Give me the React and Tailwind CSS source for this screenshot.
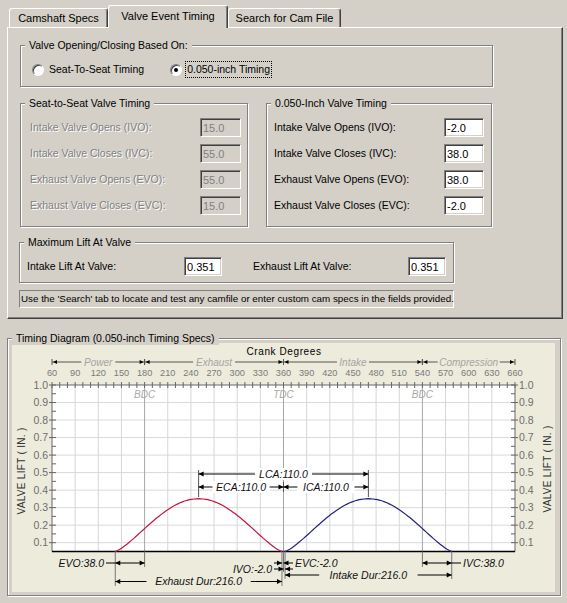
import React from 'react'

const FONT = "'Liberation Sans', Arial, sans-serif"
const CREAM = '#ecebdc'

// chart scale: degrees 60..660 across x 52..515, lift 1.0 at y 385
const X = (d) => 52 + ((d - 60) * 463) / 600
const Y = (l) => 385 + (1 - l) * 175.2

const sunken =
  'border border-t-[#808080] border-l-[#808080] border-b-white border-r-white shadow-[inset_1px_1px_0_#404040,inset_-1px_-1px_0_#d4d0c8]'
const disabledText = 'text-[#808080] [text-shadow:1px_1px_0_#fff]'

function Group({ title, className = '', children }) {
  return (
    <div className={`relative border border-[#808080] shadow-[inset_1px_1px_0_#fff,1px_1px_0_#fff] ${className}`}>
      <span className="absolute -top-[8px] left-[4px] bg-[#d4d0c8] px-[4px] leading-[14px] whitespace-nowrap">
        {title}
      </span>
      {children}
    </div>
  )
}

function Field({ value, disabled, width = 'w-[41px]' }) {
  return (
    <input
      readOnly
      value={value}
      className={`h-[19px] ${width} ${sunken} px-[2px] text-[11px] outline-none ${
        disabled ? 'bg-[#d4d0c8] text-[#808080]' : 'bg-white text-black'
      }`}
    />
  )
}

function Radio({ checked, className = '' }) {
  return (
    <span
      className={`flex h-[12px] w-[12px] shrink-0 items-center justify-center rounded-full border border-t-[#808080] border-l-[#808080] border-r-white border-b-white bg-white shadow-[inset_1px_1px_0_#404040] ${className}`}
    >
      {checked && <span className="h-[4px] w-[4px] rounded-full bg-black" />}
    </span>
  )
}

function Row({ label, value, disabled }) {
  return (
    <div className="flex h-[19px] items-center justify-between">
      <span className={disabled ? disabledText : ''}>{label}</span>
      <Field value={value} disabled={disabled} width={disabled ? 'w-[41px]' : 'w-[40px]'} />
    </div>
  )
}

const seatRows = [
  ['Intake Valve Opens (IVO):', '15.0'],
  ['Intake Valve Closes (IVC):', '55.0'],
  ['Exhaust Valve Opens (EVO):', '55.0'],
  ['Exhaust Valve Closes (EVC):', '15.0'],
]

const fiftyRows = [
  ['Intake Valve Opens (IVO):', '-2.0'],
  ['Intake Valve Closes (IVC):', '38.0'],
  ['Exhaust Valve Opens (EVO):', '38.0'],
  ['Exhaust Valve Closes (EVC):', '-2.0'],
]

const tabBase =
  'flex items-center justify-center rounded-t-[3px] border-l border-t border-white border-r border-r-[#404040] shadow-[inset_-1px_0_0_#808080] whitespace-nowrap'

function Head({ x, y, dir, size = 5 }) {
  return (
    <polygon
      points={`${x},${y} ${x - dir * size},${y - size / 2} ${x - dir * size},${y + size / 2}`}
      fill="#000"
    />
  )
}

function Label({ x, y, children, anchor = 'middle', bg = CREAM }) {
  const w = String(children).length * 5.9
  const left = anchor === 'middle' ? x - w / 2 : anchor === 'end' ? x - w : x
  return (
    <g>
      <rect x={left - 2} y={y - 6} width={w + 4} height={12} fill={bg} />
      <text x={x} y={y + 3.8} textAnchor={anchor} fontSize="10.5" fontStyle="italic" fill="#111">
        {children}
      </text>
    </g>
  )
}

function Dim({ x1, x2, y, label, bg }) {
  return (
    <g>
      <line x1={x1} y1={y} x2={x2} y2={y} stroke="#000" />
      <Head x={x1} y={y} dir={-1} />
      <Head x={x2} y={y} dir={1} />
      {label && <Label x={(x1 + x2) / 2} y={y} bg={bg}>{label}</Label>}
    </g>
  )
}

function lobe(open, close, color) {
  const pts = []
  for (let i = 0; i <= 72; i++) {
    const t = i / 72
    const lift = 0.05 + 0.301 * Math.pow(Math.sin(Math.PI * t), 1.3)
    pts.push(`${X(open + (close - open) * t).toFixed(1)},${Y(lift).toFixed(1)}`)
  }
  return <polyline points={pts.join(' ')} fill="none" stroke={color} strokeWidth="1.2" />
}

const phases = [
  [60, 180, 'Power', 30],
  [180, 360, 'Exhaust', 38],
  [360, 540, 'Intake', 28],
  [540, 660, 'Compression', 58],
]

function TimingChart() {
  const degrees = []
  for (let d = 60; d <= 660; d += 30) degrees.push(d)
  const tenths = [0.1, 0.2, 0.3, 0.4, 0.5, 0.6, 0.7, 0.8, 0.9, 1.0]
  const ticks = []
  for (let d = 60; d <= 660; d += 10) ticks.push(d)
  const halfTicks = []
  for (let l = 0.1; l <= 1.001; l += 0.05) halfTicks.push(Number(l.toFixed(2)))

  return (
    <svg width="543" height="249" viewBox="12 343 543 249" fontFamily={FONT} className="block">
      <rect x="12" y="343" width="543" height="249" fill={CREAM} />
      <rect x={X(60)} y={Y(1)} width={X(660) - X(60)} height={Y(0.05) - Y(1)} fill="#fff" />

      {/* grid */}
      {tenths.slice(0, 9).map((l) => (
        <line key={l} x1={X(60)} x2={X(660)} y1={Y(l)} y2={Y(l)} stroke="#dadada" />
      ))}
      {degrees.slice(1, -1).map((d) => (
        <line
          key={d}
          x1={X(d)}
          x2={X(d)}
          y1={Y(1)}
          y2={Y(0.05)}
          stroke={d % 180 === 0 ? '#a6a6a6' : '#d6d6d6'}
        />
      ))}

      <text x="284" y="355" textAnchor="middle" fontSize="10" letterSpacing="0.6" fill="#000">
        Crank Degrees
      </text>

      {/* phase strip */}
      {phases.map(([a, b, name, w]) => {
        const mid = (X(a) + X(b)) / 2
        return (
          <g key={name}>
            <line x1={X(a)} x2={X(b)} y1="362" y2="362" stroke="#555" />
            <line x1={X(a)} x2={X(a)} y1="359" y2="365" stroke="#555" />
            <line x1={X(b)} x2={X(b)} y1="359" y2="365" stroke="#555" />
            <Head x={X(a) + 1} y={362} dir={-1} size={4} />
            <Head x={X(b) - 1} y={362} dir={1} size={4} />
            <rect x={mid - w / 2 - 2} y="356" width={w + 4} height="12" fill={CREAM} />
            <text x={mid} y="365.5" textAnchor="middle" fontSize="10" fontStyle="italic" fill="#a4a4a4">
              {name}
            </text>
          </g>
        )
      })}

      {degrees.map((d) => (
        <text key={d} x={X(d)} y="375.5" textAnchor="middle" fontSize="9.2" fill="#7a7a7a">
          {d}
        </text>
      ))}

      {/* axes */}
      <line x1={X(60)} x2={X(660)} y1={Y(1)} y2={Y(1)} stroke="#666" />
      {ticks.map((d) => (
        <line key={d} x1={X(d)} x2={X(d)} y1={Y(1) - 3} y2={Y(1) + 3} stroke="#666" />
      ))}
      <line x1={X(60)} x2={X(60)} y1={Y(1)} y2={Y(0.05)} stroke="#666" />
      <line x1={X(660)} x2={X(660)} y1={Y(1)} y2={Y(0.05)} stroke="#666" />
      {halfTicks.map((l) => {
        const major = Math.round(l * 100) % 10 === 0
        return (
          <g key={l}>
            <line x1={X(60) - (major ? 3 : 0)} x2={X(60) + 4} y1={Y(l)} y2={Y(l)} stroke="#666" />
            <line x1={X(660) - 4} x2={X(660) + (major ? 3 : 0)} y1={Y(l)} y2={Y(l)} stroke="#666" />
          </g>
        )
      })}
      {tenths.map((l) => (
        <g key={l}>
          <text x="48" y={Y(l) + 3.6} textAnchor="end" fontSize="10.5" fill="#6e6e6e">
            {l.toFixed(1)}
          </text>
          <text x="519" y={Y(l) + 3.6} fontSize="10.5" fill="#6e6e6e">
            {l.toFixed(1)}
          </text>
        </g>
      ))}
      <line x1={X(60)} x2={X(660)} y1={Y(0.05)} y2={Y(0.05)} stroke="#000" strokeWidth="1.6" />

      <text transform="translate(25 471) rotate(-90)" textAnchor="middle" fontSize="10" letterSpacing="0.3" fill="#333">
        VALVE LIFT ( IN. )
      </text>
      <text transform="translate(551 469) rotate(-90)" textAnchor="middle" fontSize="10" letterSpacing="0.3" fill="#333">
        VALVE LIFT ( IN. )
      </text>

      {[
        [180, 'BDC'],
        [360, 'TDC'],
        [540, 'BDC'],
      ].map(([d, t]) => (
        <text key={d} x={X(d)} y="398" textAnchor="middle" fontSize="10" fontStyle="italic" fill="#a8a8a8">
          {t}
        </text>
      ))}

      {/* lobes */}
      {lobe(142, 358, '#c3173f')}
      {lobe(362, 578, '#23237e')}

      {/* centerline dimensions */}
      <line x1={X(250)} x2={X(250)} y1="470" y2="497" stroke="#555" />
      <line x1={X(470)} x2={X(470)} y1="470" y2="497" stroke="#555" />
      <line x1={X(360)} x2={X(360)} y1="482" y2="492" stroke="#555" />
      <Dim x1={X(250)} x2={X(470)} y={474} label="LCA:110.0" bg="#fff" />
      <Dim x1={X(250)} x2={X(360)} y={487} label="ECA:110.0" bg="#fff" />
      <Dim x1={X(360)} x2={X(470)} y={487} label="ICA:110.0" bg="#fff" />

      {/* extension lines below the axis */}
      {[
        [142, 586],
        [180, 567],
        [358, 586],
        [360, 572],
        [362, 579],
        [540, 567],
        [578, 579],
      ].map(([d, y2]) => (
        <line key={d} x1={X(d)} x2={X(d)} y1={Y(0.05)} y2={y2} stroke="#777" />
      ))}

      {/* EVO */}
      <line x1="106" x2={X(142)} y1="563" y2="563" stroke="#000" />
      <Dim x1={X(142)} x2={X(180)} y={563} />
      <Label x={104} y={563} anchor="end">EVO:38.0</Label>

      <Dim x1={X(142)} x2={X(358)} y={581.5} label="Exhaust Dur:216.0" />

      {/* EVC */}
      <line x1="274" x2={X(358)} y1="563" y2="563" stroke="#000" />
      <Head x={X(358)} y={563} dir={1} />
      <line x1={X(360)} x2="293" y1="563" y2="563" stroke="#000" />
      <Head x={X(360)} y={563} dir={-1} />
      <Label x={295} y={563} anchor="start">EVC:-2.0</Label>

      {/* IVO */}
      <line x1="274" x2={X(360)} y1="569" y2="569" stroke="#000" />
      <Head x={X(360)} y={569} dir={1} />
      <line x1={X(362)} x2="293" y1="569" y2="569" stroke="#000" />
      <Head x={X(362)} y={569} dir={-1} />
      <Label x={272} y={569} anchor="end">IVO:-2.0</Label>

      <Dim x1={X(362)} x2={X(578)} y={575} label="Intake Dur:216.0" />

      {/* IVC */}
      <Dim x1={X(540)} x2={X(578)} y={563} />
      <line x1={X(578)} x2="461" y1="563" y2="563" stroke="#000" />
      <Label x={463} y={563} anchor="start">IVC:38.0</Label>
    </svg>
  )
}

export default function App() {
  return (
    <div
      className="h-[603px] w-[567px] overflow-hidden bg-[#d4d0c8] pt-[5px] text-[10.5px] text-black"
      style={{ fontFamily: FONT }}
    >
      {/* tabs */}
      <div className="flex h-[22px] items-end pl-[9px] text-[11px]">
        <div className={`${tabBase} h-[19px] w-[99px]`}>Camshaft Specs</div>
        <div className={`${tabBase} relative z-10 -mb-[1px] h-[23px] w-[120px] bg-[#d4d0c8] pb-[2px]`}>
          Valve Event Timing
        </div>
        <div className={`${tabBase} h-[19px] w-[113px]`}>Search for Cam File</div>
      </div>

      {/* tab page */}
      <div className="ml-[7px] h-[292px] w-[556px] border border-t-white border-l-white border-r-[#404040] border-b-[#404040] pl-[12px] pt-[17px] shadow-[inset_-1px_-1px_0_#808080]">
        <Group title="Valve Opening/Closing Based On:" className="h-[42px] w-[473px] pl-[11px] pt-[15px]">
          <div className="flex h-[17px] items-center">
            <Radio />
            <span className="ml-[5px]">Seat-To-Seat Timing</span>
            <Radio checked className="ml-[26px]" />
            <span className="ml-[3px] border border-dotted border-black px-[1px] leading-[15px]">
              0.050-inch Timing
            </span>
          </div>
        </Group>

        <div className="mt-[16px] flex gap-[18px]">
          <Group
            title="Seat-to-Seat Valve Timing"
            className="flex h-[124px] w-[228px] flex-col gap-[7px] pl-[9px] pr-[6px] pt-[14px]"
          >
            {seatRows.map(([label, value]) => (
              <Row key={label} label={label} value={value} disabled />
            ))}
          </Group>
          <Group
            title="0.050-Inch Valve Timing"
            className="flex h-[124px] w-[226px] flex-col gap-[7px] pl-[7px] pr-[7px] pt-[14px]"
          >
            {fiftyRows.map(([label, value]) => (
              <Row key={label} label={label} value={value} />
            ))}
          </Group>
        </div>

        <Group title="Maximum Lift At Valve" className="-ml-[1px] mt-[15px] h-[41px] w-[435px] pl-[7px] pt-[14px]">
          <div className="flex h-[19px] items-center">
            <span className="w-[157px]">Intake Lift At Valve:</span>
            <Field value="0.351" width="w-[38px]" />
            <span className="ml-[31px] w-[155px]">Exhaust Lift At Valve:</span>
            <Field value="0.351" width="w-[38px]" />
          </div>
        </Group>

        <div className="-ml-[1px] mt-[7px] h-[18px] w-[435px] border border-t-[#808080] border-l-[#808080] border-b-white border-r-white px-[1px] text-[9.8px] leading-[16px] whitespace-nowrap">
          Use the 'Search' tab to locate and test any camfile or enter custom cam specs in the fields provided.
        </div>
      </div>

      {/* diagram */}
      <Group title="Timing Diagram (0.050-inch Timing Specs)" className="ml-[7px] mt-[19px] h-[258px] w-[554px] pl-[4px] pt-[4px]">
        <TimingChart />
      </Group>
    </div>
  )
}
